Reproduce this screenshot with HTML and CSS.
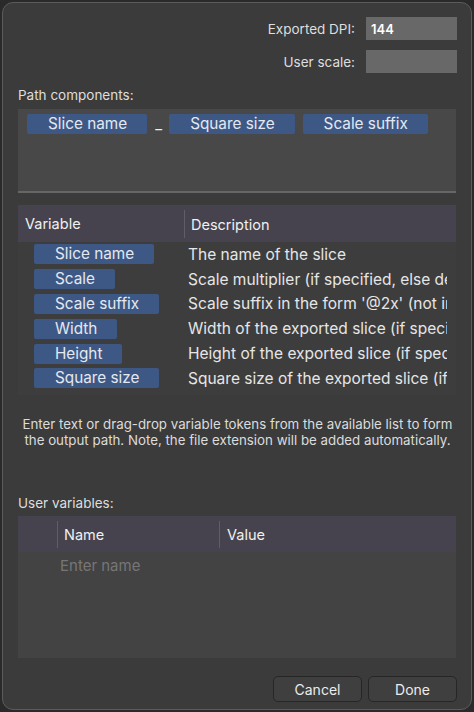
FILE: index.html
```html
<!DOCTYPE html>
<html lang="en">
<head>
    <meta charset="UTF-8">
    <meta name="viewport" content="width=device-width, initial-scale=1.0">
    <title>Export settings</title>
    <link rel="stylesheet" href="styles.css">
</head>
<body>
    <div class="sheet">

        <div class="fields">
            <div class="fieldRow">
                <label>Exported DPI:</label>
                <div class="textInput">144</div>
            </div>
            <div class="fieldRow">
                <label>User scale:</label>
                <div class="textInput"></div>
            </div>
        </div>

        <p class="sectionLabel pathLabel">Path components:</p>
        <div class="pathBox">
            <span class="token">Slice name</span>
            <span class="sep">_</span>
            <span class="token">Square size</span>
            <span class="token">Scale suffix</span>
        </div>

        <div class="varTable">
            <div class="tableHead">
                <div class="colVar">Variable</div>
                <div class="colDesc divided">Description</div>
            </div>
            <!-- list of available tokens -->
            <div class="varRow">
                <div class="colVar"><span class="token">Slice name</span></div>
                <div class="colDesc">The name of the slice</div>
            </div>
            <div class="varRow">
                <div class="colVar"><span class="token">Scale</span></div>
                <div class="colDesc">Scale multiplier (if specified, else default)</div>
            </div>
            <div class="varRow">
                <div class="colVar"><span class="token">Scale suffix</span></div>
                <div class="colDesc">Scale suffix in the form '@2x' (not included for 1x)</div>
            </div>
            <div class="varRow">
                <div class="colVar"><span class="token">Width</span></div>
                <div class="colDesc">Width of the exported slice (if specified)</div>
            </div>
            <div class="varRow">
                <div class="colVar"><span class="token">Height</span></div>
                <div class="colDesc">Height of the exported slice (if specified)</div>
            </div>
            <div class="varRow">
                <div class="colVar"><span class="token">Square size</span></div>
                <div class="colDesc">Square size of the exported slice (if specified)</div>
            </div>
        </div>

        <p class="helpText">Enter text or drag-drop variable tokens from the available list to form the output path. Note, the file extension will be added automatically.</p>

        <p class="sectionLabel userLabel">User variables:</p>
        <div class="userTable">
            <div class="tableHead">
                <div class="colCheck"></div>
                <div class="colName divided">Name</div>
                <div class="colValue divided">Value</div>
            </div>
            <div class="placeholder">Enter name</div>
        </div>

        <div class="buttons">
            <button class="btn">Cancel</button>
            <button class="btn">Done</button>
        </div>

    </div>
</body>
</html>
```

FILE: styles.css
```css
html, body {
    margin: 0;
    padding: 0;
}

body {
    background-color: #2a2a2a;
    font-family: Inter, "Noto Sans", sans-serif;
    color: #dedede;
}

.sheet {
    box-sizing: border-box;
    margin: 2px;
    width: 470px;
    height: 708px;
    border: 1px solid #5b5b5b;
    border-radius: 11px;
    background-color: #3b3b3b;
    padding: 14px 14px 0 15px;
    display: flex;
    flex-direction: column;
}

.fields {
    display: flex;
    flex-direction: column;
    gap: 10px;
}

.fieldRow {
    display: flex;
    justify-content: flex-end;
    align-items: center;
    gap: 11px;
}

.fieldRow label {
    font-size: 13.5px;
}

.textInput {
    box-sizing: border-box;
    width: 91px;
    height: 23px;
    background-color: #686868;
    color: #fff;
    font-size: 13px;
    font-weight: 600;
    padding: 4px 5px;
}

.sectionLabel {
    margin: 0;
    font-size: 13.5px;
    line-height: 16px;
}

.pathLabel {
    margin-top: 14px;
}

.pathBox {
    box-sizing: border-box;
    margin-top: 6px;
    width: 438px;
    height: 84px;
    background-color: #484848;
    border-bottom: 2px solid #666;
    padding: 5px 9px;
    display: flex;
    align-items: flex-start;
    gap: 4px;
}

.pathBox .token {
    margin-right: 4px;
}

.sep {
    font-size: 15px;
    line-height: 20px;
    width: 10px;
    color: #eee;
}

.token {
    display: inline-block;
    height: 20px;
    line-height: 20px;
    padding: 0 20px 0 21px;
    background-color: #3e5885;
    color: #e4e8f0;
    font-size: 15.3px;
    white-space: nowrap;
    border-radius: 2px;
}

.varTable {
    margin-top: 12px;
    width: 438px;
    height: 190px;
    background-color: #3d3d3d;
}

.tableHead {
    display: flex;
    align-items: center;
    height: 37px;
    background-color: #46434e;
    font-size: 14.5px;
    color: #f0f0f0;
}

.divided {
    border-left: 1.5px solid #605d69;
    align-self: stretch;
    margin: 5px 0 4px;
    display: flex;
    align-items: center;
}

.varTable .colVar {
    width: 166px;
    padding-left: 7px;
    box-sizing: border-box;
}

.varTable .colDesc {
    flex: 1;
    min-width: 0;
    padding-left: 6px;
}

.varRow {
    display: flex;
    align-items: center;
    height: 24.8px;
    font-size: 15.5px;
}

.varRow:first-of-type {
    margin-top: 1px;
}

.varRow .colVar {
    padding-left: 16px;
}

.varRow .colDesc {
    padding-left: 4px;
    margin-right: 9px;
    white-space: nowrap;
    overflow: hidden;
    color: #e6e6e6;
}

.helpText {
    margin: 21px 0 0;
    font-size: 13.3px;
    line-height: 16px;
    text-align: center;
    color: #dcdcdc;
}

.userLabel {
    margin-top: 47px;
}

.userTable {
    margin-top: 5px;
    width: 438px;
    height: 142px;
    background-color: #434343;
}

.userTable .tableHead {
    height: 36px;
}

.colCheck {
    width: 39px;
}

.colName {
    width: 155px;
    padding-left: 6px;
}

.colValue {
    flex: 1;
    padding-left: 7px;
}

.placeholder {
    padding: 4px 0 0 42px;
    font-size: 15px;
    color: #767676;
}

.buttons {
    margin-top: 18px;
    display: flex;
    justify-content: flex-end;
    gap: 6px;
}

.btn {
    width: 89px;
    height: 26px;
    border: 1px solid #262626;
    border-radius: 5px;
    background-color: #3f3f3f;
    color: #ececec;
    font-family: Inter, "Noto Sans", sans-serif;
    font-size: 14px;
}
```
